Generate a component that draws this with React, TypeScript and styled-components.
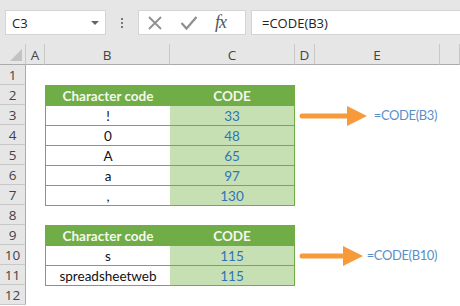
import { FC } from 'react';
import styled, { createGlobalStyle, css } from 'styled-components';

const GlobalStyle = createGlobalStyle`
    html, body {
        margin: 0;
        padding: 0;
        background: #ffffff;
    }
    body {
        font-family: Lato, "Open Sans", sans-serif;
    }
`

const Page = styled.div`
    width: 460px;
    height: 306px;
    overflow: hidden;
    background: #ffffff;
`

const FormulaBar = styled.div`
    height: 44px;
    box-sizing: border-box;
    padding: 10px 0 0 5px;
    background: #e6e6e6;
    display: flex;
    align-items: flex-start;
    font-family: "Open Sans", "Noto Sans", sans-serif;
`

const NameBox = styled.div`
    width: 101px;
    height: 25px;
    box-sizing: border-box;
    border: 1px solid #d4d4d4;
    background: #ffffff;
    display: flex;
    align-items: center;
    justify-content: space-between;
    padding: 0 6px 0 6px;
    font-size: 13px;
    color: #222;
`

const DropArrow = styled.span`
    width: 0;
    height: 0;
    border-left: 4px solid transparent;
    border-right: 4px solid transparent;
    border-top: 4px solid #666;
`

const Grip = styled.div`
    width: 32px;
    height: 25px;
    display: flex;
    flex-direction: column;
    align-items: center;
    justify-content: center;
    gap: 2px;
    & > span {
        width: 2px;
        height: 2px;
        background: #777;
    }
`

const IconBox = styled.div`
    width: 108px;
    height: 25px;
    box-sizing: border-box;
    border: 1px solid #d4d4d4;
    background: #ffffff;
    display: flex;
    align-items: center;
    padding-left: 8px;
    gap: 17px;
`

const FxLabel = styled.span`
    font-family: "Liberation Serif", serif;
    font-style: italic;
    font-size: 18px;
    color: #555;
    letter-spacing: -1px;
`

const FormulaInput = styled.div`
    flex: 1;
    height: 25px;
    margin-left: 5px;
    box-sizing: border-box;
    border: 1px solid #d4d4d4;
    border-right: none;
    background: #ffffff;
    display: flex;
    align-items: center;
    padding-left: 10px;
    font-size: 13px;
    color: #222;
`

const Sheet = styled.div`
    display: grid;
    grid-template-columns: 26px 19px 125px 125px 20px 125px 20px;
    grid-template-rows: 21px repeat(12, 20px);
    font-size: 13.5px;
`

const headerBase = css`
    background: #e6e6e6;
    color: #444;
    display: flex;
    align-items: center;
    justify-content: center;
    box-sizing: border-box;
    font-family: "Open Sans", "Noto Sans", sans-serif;
    font-size: 13.5px;
`

const Corner = styled.div`
    ${headerBase}
    border-right: 1px solid #c8c8c8;
    border-bottom: 1px solid #ababab;
    position: relative;
    &::after {
        content: '';
        position: absolute;
        right: 3px;
        bottom: 3px;
        border-left: 12px solid transparent;
        border-bottom: 12px solid #c2c2c2;
    }
`

const ColHeader = styled.div`
    ${headerBase}
    border-right: 1px solid #c8c8c8;
    border-bottom: 1px solid #ababab;
    padding-top: 1px;
`

const RowHeader = styled.div`
    ${headerBase}
    border-right: 1px solid #ababab;
    border-bottom: 1px solid #c8c8c8;
`

type Kind = 'head' | 'key' | 'val';

const Cell = styled.div<{ $kind: Kind; $left?: boolean; $right?: boolean }>`
    box-sizing: border-box;
    display: flex;
    align-items: center;
    justify-content: center;
    white-space: nowrap;
    color: #111;
    border-top: 1px solid #70ad47;
    ${p => p.$kind === 'head' && css`
        background: #70ad47;
        color: #f4f8ee;
        font-weight: 700;
    `}
    ${p => p.$kind === 'key' && css`
        background: #ffffff;
    `}
    ${p => p.$kind === 'val' && css`
        background: #c6e0b4;
        color: #2e75b6;
    `}
    ${p => p.$left && css`border-left: 1px solid #70ad47;`}
    ${p => p.$right && css`border-right: 1px solid #70ad47;`}
`

const ResultCell = styled.div<{ $row: number }>`
    grid-column: 6;
    grid-row: ${p => p.$row};
    display: flex;
    align-items: center;
    justify-content: flex-end;
    padding-right: 3px;
    color: #5b8fc7;
    font-size: 13px;
    letter-spacing: -0.4px;
    white-space: nowrap;
    z-index: 1;
`

const ArrowSlot = styled.div<{ $row: number }>`
    grid-column: 5 / 7;
    grid-row: ${p => p.$row};
    display: flex;
    align-items: center;
    padding-left: 4px;
    padding-top: 2px;
`

const BottomEdge = styled.div<{ $row: number }>`
    grid-column: 3 / 5;
    grid-row: ${p => p.$row};
    border-top: 1px solid #70ad47;
    height: 0;
`

const Arrow: FC<{ length: number }> = ({ length }) => (
    <svg width={length} height="22" viewBox={`0 0 ${length} 22`}>
        <line x1="3" y1="11" x2={length - 18} y2="11" stroke="#f79a3a" strokeWidth="5" strokeLinecap="round" />
        <polygon points={`${length - 20},1 ${length},11 ${length - 20},21`} fill="#f79a3a" />
    </svg>
);

const XIcon = () => (
    <svg width="16" height="16" viewBox="0 0 16 16">
        <path d="M2 2 L14 14 M14 2 L2 14" stroke="#8f8f8f" strokeWidth="1.8" fill="none" />
    </svg>
);

const CheckIcon = () => (
    <svg width="18" height="16" viewBox="0 0 18 16">
        <path d="M1.5 8 L6.5 13.5 L16.5 2" stroke="#8f8f8f" strokeWidth="2.2" fill="none" />
    </svg>
);

const columns = ['A', 'B', 'C', 'D', 'E', ''];

interface Row {
    key: string;
    code: string;
}

const table1: Row[] = [
    { key: '!', code: '33' },
    { key: '0', code: '48' },
    { key: 'A', code: '65' },
    { key: 'a', code: '97' },
    { key: ',', code: '130' },
];

const table2: Row[] = [
    { key: 's', code: '115' },
    { key: 'spreadsheetweb', code: '115' },
];

const App: FC = () => {
    const renderTable = (startRow: number, rows: Row[]) => {
        const out = [
            <Cell key={`h${startRow}b`} $kind="head" $left style={{ gridRow: startRow + 1, gridColumn: 3 }}>Character code</Cell>,
            <Cell key={`h${startRow}c`} $kind="head" $right style={{ gridRow: startRow + 1, gridColumn: 4 }}>CODE</Cell>,
        ];
        rows.forEach((r, i) => {
            const gr = startRow + 2 + i;
            out.push(<Cell key={`k${gr}`} $kind="key" $left style={{ gridRow: gr, gridColumn: 3 }}>{r.key}</Cell>);
            out.push(<Cell key={`v${gr}`} $kind="val" $right style={{ gridRow: gr, gridColumn: 4 }}>{r.code}</Cell>);
        });
        out.push(<BottomEdge key={`e${startRow}`} $row={startRow + 2 + rows.length} />);
        return out;
    };

    return (
        <Page>
            <GlobalStyle />
            <FormulaBar>
                <NameBox>
                    <span>C3</span>
                    <DropArrow />
                </NameBox>
                <Grip><span /><span /><span /></Grip>
                <IconBox>
                    <XIcon />
                    <CheckIcon />
                    <FxLabel>fx</FxLabel>
                </IconBox>
                <FormulaInput>=CODE(B3)</FormulaInput>
            </FormulaBar>
            <Sheet>
                <Corner />
                {columns.map((c, i) => (
                    <ColHeader key={`c${i}`}>{c}</ColHeader>
                ))}
                {Array.from({ length: 12 }, (_, i) => (
                    <RowHeader key={`r${i}`} style={{ gridRow: i + 2, gridColumn: 1 }}>{i + 1}</RowHeader>
                ))}
                {renderTable(2, table1)}
                {renderTable(9, table2)}
                <ArrowSlot $row={4}><Arrow length={68} /></ArrowSlot>
                <ResultCell $row={4}>=CODE(B3)</ResultCell>
                <ArrowSlot $row={11}><Arrow length={64} /></ArrowSlot>
                <ResultCell $row={11}>=CODE(B10)</ResultCell>
            </Sheet>
        </Page>
    );
};

export default App;
